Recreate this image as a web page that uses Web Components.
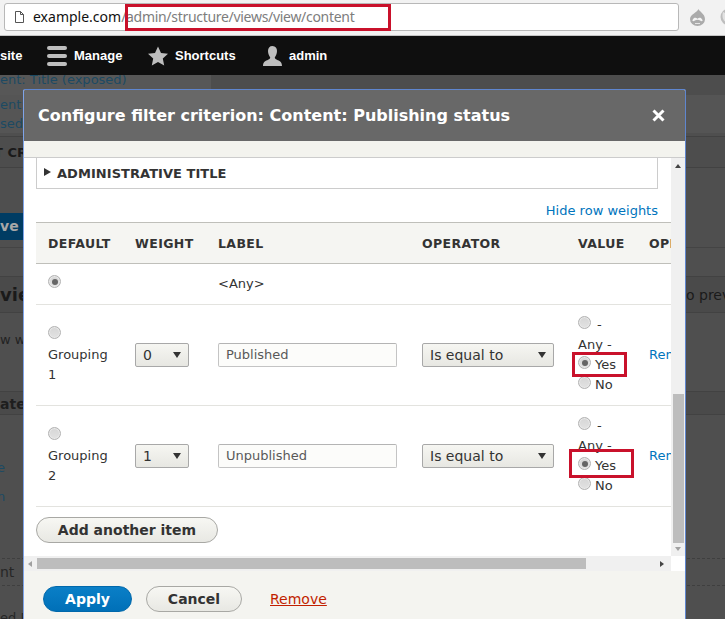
<!DOCTYPE html>
<html lang="en"><head><meta charset="utf-8"><title>Configure filter criterion</title>
<style>
html,body{margin:0;padding:0;width:725px;height:619px;overflow:hidden;background:#4f4f4f;font-family:"DejaVu Sans",sans-serif}
</style></head><body>
<browser-bar></browser-bar>
<admin-toolbar></admin-toolbar>
<page-backdrop></page-backdrop>
<filter-dialog heading="Configure filter criterion: Content: Publishing status"></filter-dialog>
<red-mark style="--x:125px;--y:4px;--w:266px;--h:27px"></red-mark>
<red-mark style="--x:572px;--y:352px;--w:55px;--h:25px"></red-mark>
<red-mark style="--x:569px;--y:449px;--w:65px;--h:29px"></red-mark>
<script>
function def(name, css, html){
  customElements.define(name, class extends HTMLElement{
    connectedCallback(){
      if(this.shadowRoot) return;
      const r=this.attachShadow({mode:'open'});
      const h=typeof html==='function'?html(this):html;
      r.innerHTML='<style>'+css+'</style>'+h;
    }
  });
}
def('red-mark',`:host{position:absolute;left:var(--x);top:var(--y);width:var(--w);height:var(--h);box-sizing:border-box;border:3px solid #c9112b;pointer-events:none}`,'');
def('browser-bar',`
:host{display:flex;align-items:flex-start;height:36px;box-sizing:border-box;background:#f2f2f2;border-bottom:1px solid #c4c4c4;padding:3px 0 0 4px;gap:11px;overflow:hidden}
.url{width:675px;height:28px;box-sizing:border-box;background:#fff;border:1px solid #b8b8b8;border-radius:3px;display:flex;align-items:center;padding-left:10px;gap:8px;font:14px/20px "Noto Sans",sans-serif;color:#111;flex:none}
.path{color:#7d7d7d;letter-spacing:-.3px}
svg{flex:none;display:block}
.ic{display:flex;gap:15px;align-items:center;margin-top:5px;flex:none}
`,`<div class="url"><svg width="9" height="12" viewBox="0 0 9 12"><path d="M.5.500h5l3 3v8h-8z" fill="#fff" stroke="#555"/><path d="M5.500.500v3h3" fill="none" stroke="#555"/></svg><span style="margin-left:1px">example.com<span class="path">/admin/structure/views/view/content</span></span></div>
<div class="ic"><svg width="15" height="17" viewBox="0 0 15 17"><path d="M8.500 0c.5 2.500 6.500 4.500 6.500 10.200a7.500 6.800 0 0 1-15 0C0 5.500 7 3.500 8.500 0z" fill="#ababab"/><path d="M2.500 11c1.500-3 3.500-2.500 5-1.300 1.500-1.300 3.500-1.700 5 1.300.4 1.300-1 1.500-2 .8-2-1.300-4-1.300-6 0-1 .7-2.400.5-2-.8z" fill="#f4f4f4"/><path d="M5 14h5v.8H5z" fill="#f4f4f4"/></svg><svg width="18" height="18" viewBox="0 0 18 18"><circle cx="9" cy="9" r="8.500" fill="#bdbdbd"/><path d="M3 4c3 1 4 3 3 5s2 3 3 6c-4 0-8-4-6-11z" fill="#e2e2e2"/></svg></div>`);
def('admin-toolbar',`
:host{display:flex;align-items:center;height:39px;background:#0f0f0f;color:#fff;font:bold 13px/20px "Liberation Sans",sans-serif;overflow:hidden;white-space:nowrap}
.i{display:flex;align-items:center;gap:7px;flex:none}
svg{display:block;flex:none}
.bars{display:flex;flex-direction:column;gap:4px;width:20px}
.bars b{display:block;height:4px;border-radius:2px;background:#bebebe}
`,`<span class="i" style="width:47px">site</span>
<span class="i" style="width:101px"><span class="bars"><b></b><b></b><b></b></span>Manage</span>
<span class="i" style="width:115px"><svg width="20" height="20" viewBox="0 0 20 20"><path d="M10 .5l3 6.500 7 .8-5.200 4.800 1.400 7L10 16.100l-6.200 3.500 1.400-7L0 7.800l7-.8z" fill="#bebebe"/></svg>Shortcuts</span>
<span class="i"><svg width="19" height="20" viewBox="0 0 19 20"><path d="M9.500 0c3 0 4.500 2.200 4.500 5s-1.300 5-2.200 6.300c0 1.600 1 2 3 3 2.500 1 4 1.700 4.200 5.700H0c.2-4 1.700-4.700 4.200-5.700 2-1 3-1.400 3-3C6.300 10 5 8 5 5s1.500-5 4.500-5z" fill="#bebebe"/></svg>admin</span>`);
def('page-backdrop',`
:host{display:block;height:544px;overflow:hidden;background:#4f4f4f;color:#1a1a1a;font:13px/18px "DejaVu Sans",sans-serif;white-space:nowrap}
.r{display:flex;justify-content:space-between;box-sizing:border-box}
.lk{color:#1c4a63}
.b{font-weight:bold}
.hd{background:#4a4a4a;border-top:1px solid #424242;border-bottom:1px solid #424242}
.dash{border-top:1px dashed #3f3f3f;border-bottom:1px dashed #3f3f3f}
`,`<div class="r lk" style="height:20px;line-height:10px;background:linear-gradient(90deg,#575757 211px,#4d4d4d 211px)">ent: Title (exposed)</div>
<div class="r lk" style="height:19px;line-height:19px;background:#555">ent:</div>
<div class="r lk" style="height:19px;line-height:19px;background:#555;margin-bottom:3px">sed</div>
<div class="r hd b" style="height:32px;line-height:32px;background:#4d4d4d;font-size:13px"><span style="margin-left:-6px">T CR</span></div>
<div style="height:45px;background:#4f4f4f"></div>
<div class="r b" style="height:27px;line-height:27px;background:linear-gradient(90deg,#003c63 23px,#4f4f4f 23px);color:#a8a8a8;font-size:14px">ve</div>
<div style="height:7px;background:#4f4f4f;border-bottom:1px solid #444"></div>
<div style="height:28px;background:#4f4f4f"></div>
<div class="r hd" style="height:37px;line-height:36px"><span class="b" style="font-size:18px">vie</span><span style="width:39px;overflow:hidden;font-size:14px">o preview</span></div>
<div class="r" style="height:78px;padding-top:18px;font-size:13px;color:#222"><span>w w</span></div>
<div class="r hd b" style="height:24px;line-height:24px;font-size:14px;color:#1e1e1e"><span>ate</span></div>
<div class="r lk" style="height:67px;padding-top:44px;margin-left:-3px">e</div>
<div class="r lk" style="height:76px;padding-top:6px;margin-left:-3px">n</div>
<div class="r dash" style="height:28px;line-height:26px;margin-left:-3px;color:#262626;font-size:14px"><span style="margin-left:3px">nt</span></div>
<div class="r" style="height:33px;padding-top:23px;font-size:13px;color:#262626">ed F</div>`);
def('radio-dot',`
:host{display:inline-block;width:13px;height:13px;box-sizing:border-box;border-radius:50%;border:1px solid #b2b2b2;background:linear-gradient(#d6d6d6,#e2e2e2);vertical-align:top;position:relative;box-shadow:inset 0 0 0 1px #e9e9e9}
:host([checked])::after{content:"";position:absolute;left:2.500px;top:2.500px;width:6px;height:6px;border-radius:50%;background:#666}
`,'');
def('fake-select',`
:host{display:flex;align-items:center;justify-content:space-between;box-sizing:border-box;height:24px;padding:0 7px;background:linear-gradient(#f6f6f2,#e7e7e2);border:1px solid #a8a8a8;border-radius:2px;color:#333;font-size:14px;line-height:20px;white-space:nowrap}
i{width:0;height:0;border-left:4.500px solid transparent;border-right:4.500px solid transparent;border-top:6px solid #333}
`,`<span><slot></slot></span><i></i>`);
def('fake-input',`
:host{display:block;box-sizing:border-box;height:24px;padding:0 7px;background:#fcfcfa;border:1px solid #c4c4c4;border-top-color:#b4b4b4;border-radius:2px;color:#595959;font-size:13px;line-height:22px}
`,`<slot></slot>`);
const COLS='grid-template-columns:87px 83px 204px 156px 71px 80px;';
def('filter-row',`
:host{display:grid;${COLS}width:681px;align-items:center;border-bottom:1px solid #e3e3df;box-sizing:border-box;height:101px;color:#333;font-size:13px;line-height:20px}
.c{padding-left:12px;min-width:0}
.v{padding-left:12px}
.v div{white-space:nowrap;height:20px}
radio-dot{margin-top:1px}
.col1 div{height:20px;white-space:nowrap}
.col1 radio-dot{margin-top:1px}
a{color:#0074bd;text-decoration:none}
`,el=>{
  const g=el.getAttribute('group'),w=el.getAttribute('weight'),l=el.getAttribute('label');
  return `<div class="c col1"><div><radio-dot></radio-dot></div><div>Grouping</div><div>${g}</div></div>
<div class="c"><fake-select style="width:54px">${w}</fake-select></div>
<div class="c"><fake-input style="width:179px">${l}</fake-input></div>
<div class="c"><fake-select style="width:132px">Is equal to</fake-select></div>
<div class="v"><div><radio-dot></radio-dot><span style="margin-left:6px">-</span></div><div>Any -</div><div><radio-dot checked></radio-dot><span style="margin-left:4px">Yes</span></div><div><radio-dot></radio-dot><span style="margin-left:4px">No</span></div></div>
<div class="c"><a href="#">Remove</a></div>`;
});
def('filter-table',`
:host{display:block;width:681px;color:#333;font-size:13px}
.h{display:grid;${COLS}align-items:center;height:42px;box-sizing:border-box;background:#f5f5f2;border-top:1px solid #bfbfba;border-bottom:1px solid #bfbfba;font-weight:bold;font-size:12.500px;letter-spacing:.4px;color:#333;white-space:nowrap}
.h span{padding-left:12px}
.a{display:grid;${COLS}height:41px;box-sizing:border-box;border-bottom:1px solid #e3e3df;line-height:20px}
.a span{padding-left:12px}
.a .p{padding-top:11px}
.a .q{padding-top:10px}
`,`<div class="h"><span>DEFAULT</span><span>WEIGHT</span><span>LABEL</span><span>OPERATOR</span><span>VALUE</span><span>OPERATIONS</span></div>
<div class="a"><span class="p"><radio-dot checked></radio-dot></span><span></span><span class="q">&lt;Any&gt;</span></div>
<filter-row group="1" weight="0" label="Published"></filter-row>
<filter-row group="2" weight="1" label="Unpublished"></filter-row>`);
def('pill-button',`
:host{display:inline-flex;align-items:center;justify-content:center;box-sizing:border-box;height:26px;border-radius:13px;border:1px solid #a8a8a4;background:linear-gradient(#f7f7f3,#e8e8e3);color:#333;font:bold 14px/20px "DejaVu Sans",sans-serif;white-space:nowrap;flex:none}
:host([primary]){background:linear-gradient(#0a7fc7,#0070b8);border-color:#0068ab;color:#fff}
`,`<slot></slot>`);
def('scroll-v',`
:host{display:flex;flex-direction:column;align-items:center;background:#f0f0f0;height:398px;box-sizing:border-box;overflow:hidden}
.up{margin-top:6px;width:0;height:0;border-left:3.500px solid transparent;border-right:3.500px solid transparent;border-bottom:4px solid #444;flex:none}
.sp{height:226px;flex:none}
.th{width:11px;height:149px;background:#bdbdbd;flex:none}
.dn{margin-top:4px;width:0;height:0;border-left:3.500px solid transparent;border-right:3.500px solid transparent;border-top:4px solid #a0a0a0;flex:none}
`,`<div class="up"></div><div class="sp"></div><div class="th"></div><div class="dn"></div>`);
def('scroll-h',`
:host{display:flex;align-items:center;background:#f0f0f0;height:15px;overflow:hidden}
.l{margin-left:4px;width:0;height:0;border-top:3.500px solid transparent;border-bottom:3.500px solid transparent;border-right:4px solid #a0a0a0;flex:none}
.th{margin-left:5px;width:549px;height:11px;background:#bdbdbd;flex:none}
.r{margin-left:74px;width:0;height:0;border-top:3.500px solid transparent;border-bottom:3.500px solid transparent;border-left:4px solid #444;flex:none}
`,`<div class="l"></div><div class="th"></div><div class="r"></div>`);
def('filter-dialog',`
:host{position:absolute;left:23px;top:89px;width:663px;height:535px;box-sizing:border-box;border:1px solid #5f86cf;border-left-color:#7ea4ea;border-radius:2px 2px 0 0;background:#f4f4f0;display:flex;flex-direction:column;font-family:"DejaVu Sans",sans-serif;overflow:hidden}
.t{height:51px;flex:none;background:#686868;display:flex;align-items:center;justify-content:space-between;padding:0 20px 0 14px;color:#fff;font-weight:bold;font-size:16px;white-space:nowrap}
.x{width:13px;height:13px;display:block}
.strip{height:17px;flex:none;box-sizing:border-box;background:#f3f3ee;border-bottom:1px solid #ccc}
.sc{display:grid;grid-template-columns:647px 14px;grid-template-rows:398px 15px;flex:none}
.body{background:#fff;overflow:hidden;padding-left:12px}
.box{width:622px;height:31px;box-sizing:border-box;border:1px solid #ccc;border-top:0}
.sum{display:flex;align-items:center;height:30px;padding-left:7px;gap:6px;font-weight:bold;font-size:13px;letter-spacing:.05px;color:#333;white-space:nowrap}
.tri{width:0;height:0;border-top:4px solid transparent;border-bottom:4px solid transparent;border-left:7px solid #333;margin-top:-2px}
.hide{width:622px;text-align:right;height:33px;line-height:44px;font-size:13px;color:#0074bd;box-sizing:border-box}
.hide a{color:inherit;text-decoration:none}
pill-button.add{width:182px;margin-top:10px}
.corner{background:#fff}
.f{display:flex;align-items:flex-start;padding:15px 0 0 19px;flex:1}
.rm{color:#c11f00;font-size:14px;line-height:26px;margin-left:28px}
`,el=>`<div class="t"><span>${el.getAttribute('heading')}</span><svg class="x" viewBox="0 0 13 13"><path d="M1.500 1.500l10 10M11.500 1.500l-10 10" stroke="#fff" stroke-width="3"/></svg></div>
<div class="strip"></div>
<div class="sc"><div class="body"><div class="box"><div class="sum"><span class="tri"></span>ADMINISTRATIVE TITLE</div></div>
<div class="hide"><a href="#">Hide row weights</a></div>
<filter-table></filter-table>
<pill-button class="add">Add another item</pill-button></div><scroll-v></scroll-v><scroll-h></scroll-h><div class="corner"></div></div>
<div class="f"><pill-button primary style="width:89px">Apply</pill-button><pill-button style="width:96px;margin-left:14px">Cancel</pill-button><a class="rm" href="#">Remove</a></div>`);
</script>
</body></html>
